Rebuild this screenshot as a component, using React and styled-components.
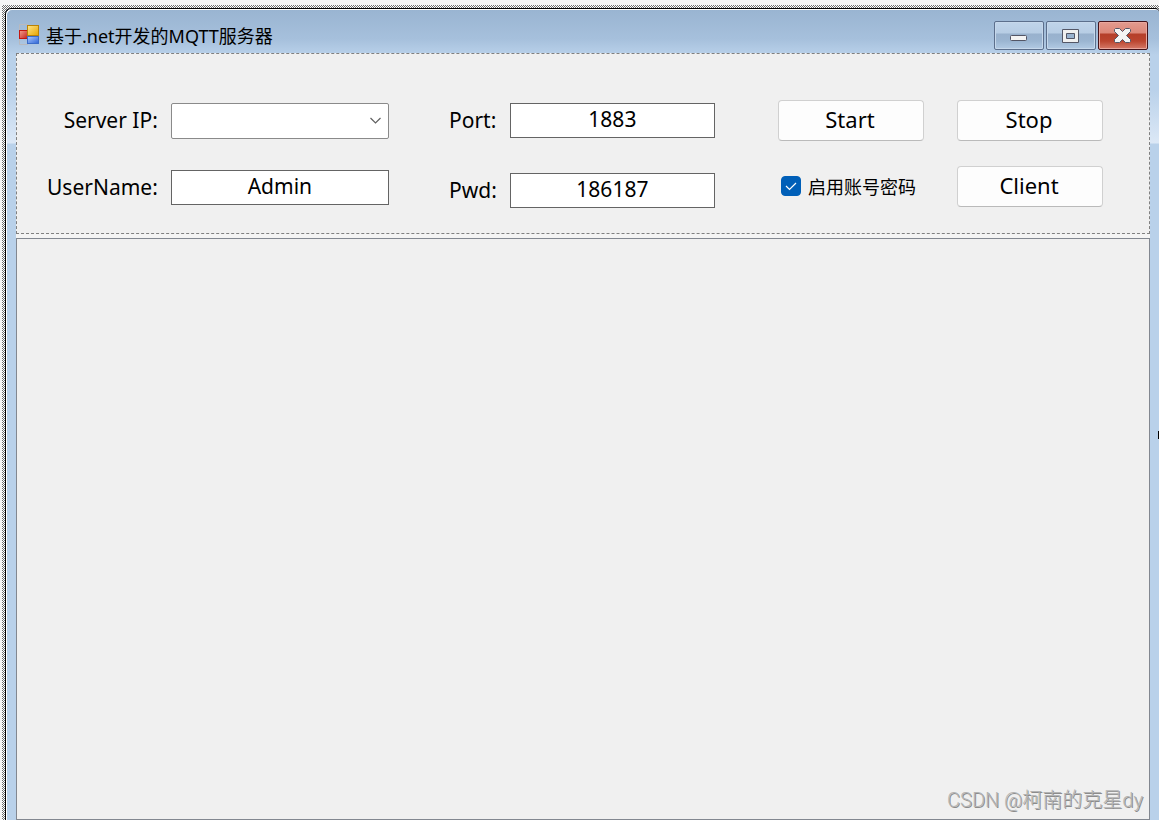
import React, { useState } from 'react'
import styled, { createGlobalStyle } from 'styled-components'


const GlobalStyle = createGlobalStyle`
    * {
        box-sizing: border-box;
    }

    body {
        margin: 0;
        background: #f5f5f5;
        color: #000;
        font-family: 'Noto Sans', 'Noto Sans CJK SC', sans-serif;
    }

    button, input, select {
        font-family: inherit;
        color: inherit;
    }
`


const Designer = styled.div`
    min-height: 100vh;
    padding: 5px 0 0 2px;
    display: flex;
    flex-direction: column;
    position: relative;
    overflow: hidden;
`


const Hatch = styled.div`
    flex: 1;
    display: flex;
    padding: 3px 0 0 3px;
    background: repeating-conic-gradient(#6e6e6e 0 25%, #fff 0 50%) 0 0 / 2px 2px;
`


const Frame = styled.div`
    flex: 1;
    min-width: 0;
    display: flex;
    flex-direction: column;
    padding: 0 9px 0 10px;
    border: solid #000;
    border-width: 1px 0 0 1px;
    border-radius: 6px 4px 0 0;
    box-shadow: inset 1px 1px 0 #fff;
    background: linear-gradient(#99b4d1 0, #a6c0dc 30px, #b9d1ea 46px, #b9d1ea 80px, #dce8f6 134px, #b9d1ea 135px);
`


const TitleBar = styled.header`
    height: 44px;
    padding: 12px 2px 0 3px;
    display: flex;
    align-items: flex-start;
    gap: 5px;
`


const Title = styled.h1`
    flex: 1;
    margin: 0;
    font-size: 18px;
    line-height: 30px;
    font-weight: 400;
`


const AppIcon = styled.svg`
    width: 22px;
    height: 22px;
    margin-top: 3px;
`


const Caption = styled.div`
    display: flex;
    gap: 2px;
`


const CaptionButton = styled.button`
    width: 50px;
    height: 29px;
    padding: 0;
    display: flex;
    align-items: center;
    justify-content: center;
    border: 1px solid ${props => (props.$close ? '#43131a' : '#5c6f8c')};
    border-radius: 2px;
    box-shadow: inset 0 0 0 1px ${props => (props.$close ? '#e9a79d' : '#c6d8eb')};
    background: ${props => (props.$close
        ? 'linear-gradient(#e29b8f 0, #dc8778 11px, #b53f2a 12px, #bb452f 19px, #d98170 28px)'
        : 'linear-gradient(#c0d4ea 0, #b7cde4 11px, #98b1cd 12px, #9bb5d1 19px, #b5cde6 28px)')};
`


const Settings = styled.form`
    height: 181px;
    padding: 0 46px 0 30px;
    display: flex;
    border: 1px dashed #808080;
    background: #f0f0f0;
`


const Fields = styled.div`
    flex: ${props => props.$grow};
    min-width: 0;
    display: grid;
    grid-template-columns: auto 1fr;
    grid-auto-rows: ${props => props.$row}px;
    gap: ${props => props.$gap}px 13px;
    align-items: start;
    padding-top: 49px;
    margin-right: ${props => props.$space}px;
`


const Label = styled.label`
    font-size: 21px;
    line-height: 34px;
    text-align: ${props => props.$align || 'left'};
    white-space: nowrap;
`


const TextBox = styled.input`
    width: 100%;
    height: 35px;
    padding: 0 4px 4px;
    border: 1px solid #646464;
    background: #fff;
    font-size: 21px;
    text-align: center;
    outline: none;
`


const Combo = styled.div`
    display: grid;
    align-items: center;

    > * {
        grid-area: 1 / 1;
    }

    svg {
        justify-self: end;
        margin-right: 7px;
        pointer-events: none;
    }
`


const Select = styled.select`
    width: 100%;
    height: 36px;
    padding: 0 28px 0 6px;
    appearance: none;
    border: 1px solid #8a8a8a;
    border-radius: 2px;
    background: #fff;
    font-size: 21px;
    outline: none;
`


const Actions = styled.div`
    display: grid;
    grid-template-columns: 146px 146px;
    grid-auto-rows: 41px;
    gap: 25px 33px;
    padding-top: 46px;
`


const Button = styled.button`
    padding: 0 2px 4px 0;
    border: 1px solid #d0d0d0;
    border-bottom-color: #bababa;
    border-radius: 4px;
    background: #fdfdfd;
    font-size: 22px;
`


const CheckLabel = styled.label`
    display: flex;
    align-items: center;
    gap: 7px;
    padding: 0 0 2px 3px;
    font-size: 18px;
    white-space: nowrap;
`


const CheckBox = styled.input`
    appearance: none;
    width: 20px;
    height: 20px;
    margin: 0;
    border: 1px solid #8a8a8a;
    border-radius: 4px;
    background: #fff;

    &:checked {
        border-color: #005fb8;
        background: #005fb8;
    }
`


const CheckWrap = styled.span`
    display: grid;
    place-items: center;

    > * {
        grid-area: 1 / 1;
    }

    svg {
        pointer-events: none;
    }
`


const Log = styled.main`
    flex: 1;
    margin-top: 4px;
    border: 1px solid #828790;
    background: #f0f0f0;
    box-shadow: 0 -4px 0 #f4f4f4;
`


const Watermark = styled.div`
    position: absolute;
    right: 16px;
    bottom: 5px;
    font-family: Roboto, 'Noto Sans CJK SC', sans-serif;
    font-size: 20px;
    font-weight: 300;
    line-height: 30px;
    color: #b4b4b4;
    text-shadow: 1px 1px 0 #8c8c8c;
`


const Grip = styled.span`
    position: absolute;
    top: 431px;
    right: 0;
    width: 1px;
    height: 8px;
    background: #000;
`


function FormIcon() {
    return (
        <AppIcon viewBox="0 0 22 22" aria-hidden="true">
            <defs>
                <linearGradient id="red" x2="1" y2="1">
                    <stop stopColor="#f4a08e" />
                    <stop offset="1" stopColor="#c21f1b" />
                </linearGradient>
                <linearGradient id="yellow" x2="1" y2="1">
                    <stop stopColor="#ffe58a" />
                    <stop offset="1" stopColor="#e6a500" />
                </linearGradient>
                <linearGradient id="blue" x2="1" y2="1">
                    <stop stopColor="#a9c8ff" />
                    <stop offset="1" stopColor="#2f65d6" />
                </linearGradient>
            </defs>
            <path d="M.5 6V.5H9M.5 15v5.500H9" fill="none" stroke="#b9b9bd" />
            <rect x=".5" y="6.500" width="8" height="8" fill="url(#red)" stroke="#c4160f" />
            <rect x="8.500" y="1.500" width="11" height="10" fill="url(#yellow)" stroke="#b98207" />
            <rect x="8.500" y="12.500" width="11" height="7" fill="url(#blue)" stroke="#3b6cc9" />
        </AppIcon>
    )
}


function MinimizeIcon() {
    return (
        <svg width="18" height="18" viewBox="0 0 18 18">
            <rect x=".5" y="8.500" width="16" height="5" rx="1" fill="#f3f3f3" stroke="#535666" />
        </svg>
    )
}


function MaximizeIcon() {
    return (
        <svg width="18" height="16" viewBox="0 0 18 16">
            <path
                d="M.5 1.500h16v13h-16zM4.500 5.500v5h8v-5z"
                fill="#f0f0f0"
                fillRule="evenodd"
                stroke="#535666"
                strokeLinejoin="round"
            />
        </svg>
    )
}


function CloseIcon() {
    return (
        <svg width="18" height="16" viewBox="0 0 18 16">
            <path
                d="M1.500 .5h4l3 3 3-3h4l1 1v2l-4 4 4 4v2l-1 1h-4l-3-3-3 3h-4l-1-1v-2l4-4-4-4v-2z"
                fill="#f5f5f5"
                stroke="#535666"
                strokeLinejoin="round"
            />
        </svg>
    )
}


function App() {
    const [username, setUsername] = useState('Admin')
    const [port, setPort] = useState('1883')
    const [pwd, setPwd] = useState('186187')
    const [useAccount, setUseAccount] = useState(true)

    return (
        <Designer>
            <GlobalStyle />
            <Hatch>
                <Frame>
                    <TitleBar>
                        <FormIcon />
                        <Title>基于.net开发的MQTT服务器</Title>
                        <Caption>
                            <CaptionButton type="button" aria-label="Minimize"><MinimizeIcon /></CaptionButton>
                            <CaptionButton type="button" aria-label="Maximize"><MaximizeIcon /></CaptionButton>
                            <CaptionButton type="button" aria-label="Close" $close><CloseIcon /></CaptionButton>
                        </Caption>
                    </TitleBar>
                    <Settings onSubmit={e => e.preventDefault()}>
                        <Fields $grow={342} $row={36} $gap={31} $space={60}>
                            <Label htmlFor="server" $align="right">Server IP:</Label>
                            <Combo>
                                <Select id="server" />
                                <svg width="13" height="8" viewBox="0 0 13 8">
                                    <path d="M1.500 1l5 5 5-5" fill="none" stroke="#606060" strokeWidth="1.200" />
                                </svg>
                            </Combo>
                            <Label htmlFor="username" $align="right">UserName:</Label>
                            <TextBox id="username" value={username} onChange={e => setUsername(e.target.value)} />
                        </Fields>
                        <Fields $grow={266} $row={35} $gap={35} $space={63}>
                            <Label htmlFor="port">Port:</Label>
                            <TextBox id="port" value={port} onChange={e => setPort(e.target.value)} />
                            <Label htmlFor="pwd">Pwd:</Label>
                            <TextBox id="pwd" value={pwd} onChange={e => setPwd(e.target.value)} />
                        </Fields>
                        <Actions>
                            <Button type="submit">Start</Button>
                            <Button type="button">Stop</Button>
                            <CheckLabel>
                                <CheckWrap>
                                    <CheckBox
                                        type="checkbox"
                                        checked={useAccount}
                                        onChange={e => setUseAccount(e.target.checked)}
                                    />
                                    <svg width="12" height="10" viewBox="0 0 12 10">
                                        <path d="M1 5l3.500 3.500L11 2" fill="none" stroke="#fff" strokeWidth="1.200" />
                                    </svg>
                                </CheckWrap>
                                启用账号密码
                            </CheckLabel>
                            <Button type="button">Client</Button>
                        </Actions>
                    </Settings>
                    <Log />
                </Frame>
            </Hatch>
            <Grip />
            <Watermark>CSDN @柯南的克星dy</Watermark>
        </Designer>
    )
}


export default App
